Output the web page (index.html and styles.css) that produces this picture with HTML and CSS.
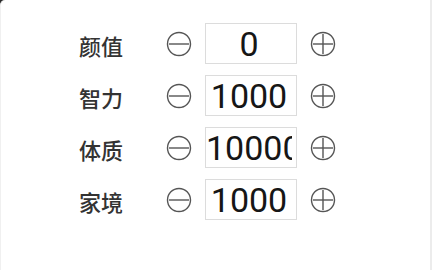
FILE: index.html
```html
<!DOCTYPE html>
<html lang="zh">
<head>
<meta charset="utf-8">
<link rel="stylesheet" href="styles.css">
</head>
<body>
<div class="panel">
  <div class="rows">
    <div class="row">
      <span class="label">颜值</span>
      <svg class="btn" viewBox="0 0 26 26"><circle cx="13" cy="13" r="11.5"/><line x1="3" y1="13" x2="23" y2="13"/></svg>
      <input class="val" type="text" value="0">
      <svg class="btn" viewBox="0 0 26 26"><circle cx="13" cy="13" r="11.5"/><line x1="3" y1="13" x2="23" y2="13"/><line x1="13" y1="3" x2="13" y2="23"/></svg>
    </div>
    <div class="row">
      <span class="label">智力</span>
      <svg class="btn" viewBox="0 0 26 26"><circle cx="13" cy="13" r="11.5"/><line x1="3" y1="13" x2="23" y2="13"/></svg>
      <input class="val" type="text" value="1000">
      <svg class="btn" viewBox="0 0 26 26"><circle cx="13" cy="13" r="11.5"/><line x1="3" y1="13" x2="23" y2="13"/><line x1="13" y1="3" x2="13" y2="23"/></svg>
    </div>
    <div class="row">
      <span class="label">体质</span>
      <svg class="btn" viewBox="0 0 26 26"><circle cx="13" cy="13" r="11.5"/><line x1="3" y1="13" x2="23" y2="13"/></svg>
      <input class="val" type="text" value="10000">
      <svg class="btn" viewBox="0 0 26 26"><circle cx="13" cy="13" r="11.5"/><line x1="3" y1="13" x2="23" y2="13"/><line x1="13" y1="3" x2="13" y2="23"/></svg>
    </div>
    <div class="row">
      <span class="label">家境</span>
      <svg class="btn" viewBox="0 0 26 26"><circle cx="13" cy="13" r="11.5"/><line x1="3" y1="13" x2="23" y2="13"/></svg>
      <input class="val" type="text" value="1000">
      <svg class="btn" viewBox="0 0 26 26"><circle cx="13" cy="13" r="11.5"/><line x1="3" y1="13" x2="23" y2="13"/><line x1="13" y1="3" x2="13" y2="23"/></svg>
    </div>
  </div>
</div>
</body>
</html>
```
FILE: styles.css
```css
html {
  margin: 0;
  background: #2a2a2a;
}
body {
  margin: 0;
  width: 432px;
  height: 270px;
  overflow: hidden;
}
.panel {
  width: 432px;
  height: 270px;
  box-sizing: border-box;
  background: #fff;
  border-top-left-radius: 5px;
  border-left: 1px solid #f0f0f0;
  border-right: 2px solid #ececec;
  padding: 23px 0 0 78px;
}
.rows {
  display: flex;
  flex-direction: column;
  row-gap: 11px;
}
.row {
  display: flex;
  align-items: center;
  height: 41px;
}
.label {
  width: 87px;
  font-family: "Noto Sans CJK SC", "Noto Sans", sans-serif;
  font-size: 22px;
  font-weight: 500;
  line-height: 28px;
  color: #333;
  padding-top: 3px;
}
.btn {
  width: 26px;
  height: 26px;
  fill: none;
  stroke: #555;
  stroke-width: 1.4;
  flex: none;
}
.val {
  margin: 0 13px;
  width: 92px;
  height: 41px;
  box-sizing: border-box;
  border: 1px solid #dcdcdc;
  border-radius: 0;
  padding: 0 4px 0 0;
  background: #fff;
  outline: none;
  font-family: Roboto, "Liberation Sans", sans-serif;
  font-size: 34px;
  color: #161616;
  text-align: center;
}
```
